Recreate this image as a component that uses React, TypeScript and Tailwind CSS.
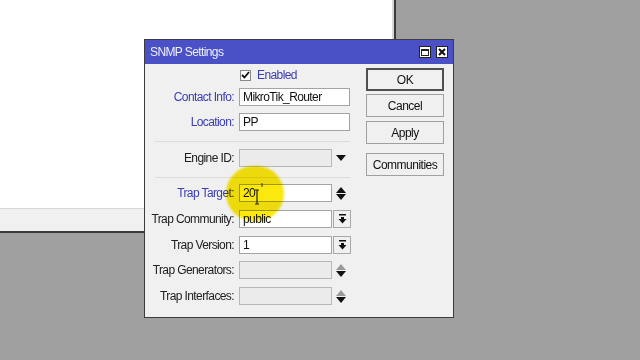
import React from 'react';

const font = { fontFamily: '"Liberation Sans", Arial, sans-serif' };

// little glyphs used next to the fields
function DownArrow({ gray = false }: { gray?: boolean }) {
  return (
    <svg width="10" height="6" viewBox="0 0 10 6">
      <polygon points="0,0 10,0 5,6" fill={gray ? '#9a9a9a' : '#111'} />
    </svg>
  );
}

function UpArrow({ gray = false }: { gray?: boolean }) {
  return (
    <svg width="10" height="6" viewBox="0 0 10 6">
      <polygon points="0,6 10,6 5,0" fill={gray ? '#9a9a9a' : '#111'} />
    </svg>
  );
}

function Spinner({ disabled = false }: { disabled?: boolean }) {
  return (
    <div className="w-[18px] h-full flex flex-col items-center justify-center gap-[1px]">
      <UpArrow gray={disabled} />
      <DownArrow />
    </div>
  );
}

function PullDown() {
  return (
    <div className="w-[18px] h-full ml-[1px] border border-[#a8a8a8] bg-[#f0f0f0] flex items-center justify-center">
      <svg width="9" height="10" viewBox="0 0 9 10">
        <rect x="1" y="0" width="7" height="1.5" fill="#111" />
        <polygon points="3,3 6,3 6,5 8.5,5 4.5,9.5 0.5,5 3,5" fill="#111" />
      </svg>
    </div>
  );
}

interface RowProps {
  label: string;
  blue?: boolean;
  value?: string;
  short?: boolean;
  disabled?: boolean;
  extra?: React.ReactNode;
  className?: string;
}

function Row({ label, blue = false, value = '', short = false, disabled = false, extra, className = '' }: RowProps) {
  return (
    <div className={`flex items-center h-[18px] ${className}`}>
      <div className={`w-[89px] text-right text-[12px] tracking-[-0.6px] leading-none whitespace-nowrap ${blue ? 'text-[#3a3cb2]' : 'text-[#202020]'}`}>
        {label}
      </div>
      <div
        className={`ml-[5px] h-full border flex items-center px-[3px] text-[12px] tracking-[-0.6px] leading-none text-[#111] ${
          short ? 'w-[93px]' : 'w-[111px]'
        } ${disabled ? 'bg-[#ebebeb] border-[#b8b8b8]' : 'bg-white border-[#a4a4a4]'}`}
      >
        {value}
      </div>
      {extra}
    </div>
  );
}

function Button({ children, primary = false, className = '' }: { children: React.ReactNode; primary?: boolean; className?: string }) {
  return (
    <div
      className={`w-[78px] h-[23px] flex items-center justify-center bg-[#f0f0f0] text-[12px] tracking-[-0.5px] text-[#111] ${
        primary ? 'border-2 border-[#505050]' : 'border border-[#a0a0a0]'
      } ${className}`}
    >
      {children}
    </div>
  );
}

export default function App() {
  return (
    <div className="relative w-[640px] h-[360px] overflow-hidden bg-[#a0a0a0]" style={font}>
      {/* window behind the dialog */}
      <div className="absolute left-0 top-0 w-[396px] h-[233px] flex flex-col bg-[#f0f0f0] border-r-2 border-b-2 border-[#3a3a3a]">
        <div className="h-[209px] bg-white border-r-2 border-b border-[#d8d8d8]" />
      </div>

      {/* SNMP Settings dialog */}
      <div className="absolute left-[144px] top-[39px] w-[310px] h-[279px] flex flex-col bg-[#f0f0f0] border border-[#3c3c3c]">
        <div className="h-[24px] shrink-0 bg-[#4a51c6] flex items-center pl-[5px] pr-[5px]">
          <span className="text-[12px] tracking-[-0.6px] text-[#eef0ff]">SNMP Settings</span>
          <div className="ml-auto flex gap-[5px]">
            <div className="w-[12px] h-[12px] bg-white border border-[#222] flex items-center justify-center">
              <div className="w-[8px] h-[7px] border border-[#222] border-t-2" />
            </div>
            <div className="w-[12px] h-[12px] bg-white border border-[#222] flex items-center justify-center">
              <svg width="8" height="8" viewBox="0 0 8 8">
                <path d="M1 1 L7 7 M7 1 L1 7" stroke="#111" strokeWidth="2" />
              </svg>
            </div>
          </div>
        </div>

        <div className="flex flex-1">
          {/* form column */}
          <div className="w-[210px] flex flex-col">
            <div className="mt-[3px] h-[16px] flex items-center pl-[95px]">
              <div className="w-[11px] h-[11px] bg-white border border-[#8a8a8a] flex items-center justify-center">
                <svg width="9" height="8" viewBox="0 0 9 8">
                  <path d="M1 4 L3.5 6.5 L8 1" stroke="#111" strokeWidth="1.8" fill="none" />
                </svg>
              </div>
              <span className="ml-[6px] text-[12px] tracking-[-0.6px] text-[#3a3cb2]">Enabled</span>
            </div>

            <Row className="mt-[5px]" label="Contact Info:" blue value="MikroTik_Router" />
            <Row className="mt-[7px]" label="Location:" blue value="PP" />

            <div className="mt-[10px] ml-[10px] w-[195px] h-px bg-[#dcdcdc]" />

            <Row
              className="mt-[7px]"
              label="Engine ID:"
              short
              disabled
              extra={
                <div className="w-[18px] h-full flex items-center justify-center">
                  <DownArrow />
                </div>
              }
            />

            <div className="mt-[10px] ml-[10px] w-[195px] h-px bg-[#dcdcdc]" />

            <Row className="mt-[6px]" label="Trap Target:" blue value="20" short extra={<Spinner />} />
            <Row className="mt-[8px]" label="Trap Community:" value="public" short extra={<PullDown />} />
            <Row className="mt-[8px]" label="Trap Version:" value="1" short extra={<PullDown />} />
            <Row className="mt-[7px]" label="Trap Generators:" short disabled extra={<Spinner disabled />} />
            <Row className="mt-[8px]" label="Trap Interfaces:" short disabled extra={<Spinner disabled />} />
          </div>

          {/* buttons */}
          <div className="ml-[11px] pt-[4px] flex flex-col">
            <Button primary>OK</Button>
            <Button className="mt-[3px]">Cancel</Button>
            <Button className="mt-[4px]">Apply</Button>
            <Button className="mt-[9px]">Communities</Button>
          </div>
        </div>
      </div>

      {/* mouse highlight and text cursor over Trap Target */}
      <div className="absolute left-[226px] top-[166px] w-[58px] h-[55px] rounded-full bg-[#fbe80c] mix-blend-multiply blur-[1px]" />
      <svg className="absolute left-[253px] top-[182px]" width="12" height="26" viewBox="0 0 12 26">
        <path d="M9 1 V5" stroke="#333" strokeWidth="1" />
        <path d="M2 8 H6 M4 8 V22 M2 22 H6" stroke="#222" strokeWidth="1.2" fill="none" />
      </svg>
    </div>
  );
}
